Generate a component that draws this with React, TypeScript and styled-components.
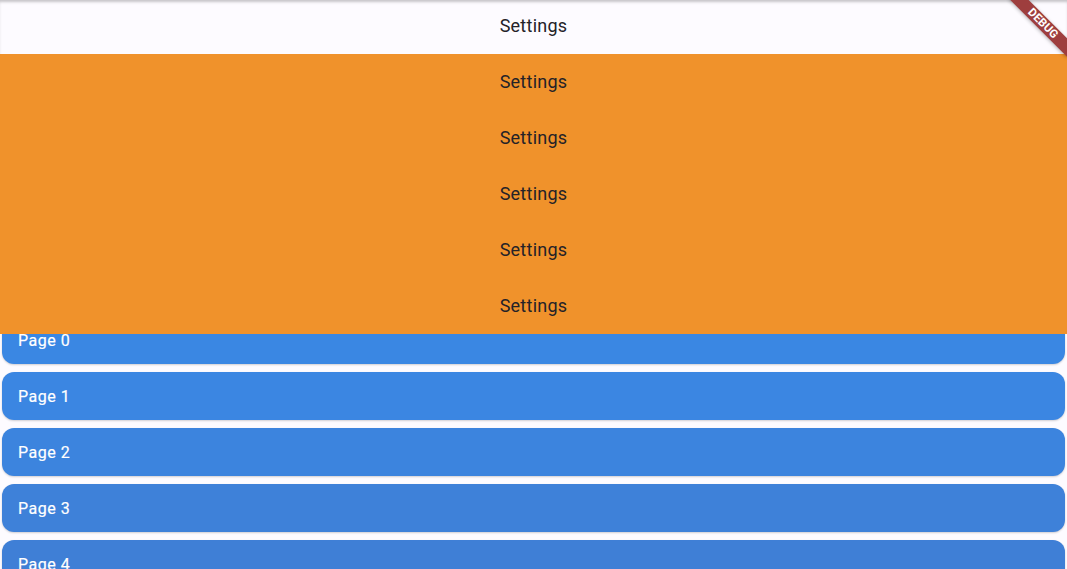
import React from "react";
import styled, { createGlobalStyle } from "styled-components";

const Global = createGlobalStyle`
  html, body { margin: 0; padding: 0; background: #fdfbff; }
  body { font-family: Roboto, "Noto Sans", sans-serif; overflow: hidden; }
  #root { height: 569px; }
`;

const Screen = styled.div`
  position: relative;
  width: 1067px;
  height: 569px;
  display: flex;
  flex-direction: column;
  background: #fdfbff;
  overflow: hidden;
`;

const Header = styled.div`
  height: 54px;
  box-sizing: border-box;
  padding-bottom: 4px;
  flex: none;
  display: flex;
  align-items: center;
  justify-content: center;
  background: #fdfbff;
  box-shadow: inset 0 3px 3px -1px rgba(0, 0, 0, 0.22);
  position: relative;
  z-index: 2;
`;

const Label = styled.span`
  font-size: 18px;
  color: #242228;
  letter-spacing: 0.25px;
`;

const Panel = styled.div`
  flex: none;
  display: flex;
  flex-direction: column;
  background: #f0922b;
  position: relative;
  z-index: 2;
`;

const PanelRow = styled.div`
  height: 56px;
  box-sizing: border-box;
  padding-bottom: 2px;
  display: flex;
  align-items: center;
  justify-content: center;
`;

const ListClip = styled.div`
  flex: 1;
  overflow: hidden;
`;

const List = styled.div`
  display: flex;
  flex-direction: column;
  gap: 8px;
  margin-top: -18px;
  padding: 0 2px;
`;

const Card = styled.div<{ $bg: string }>`
  height: 48px;
  flex: none;
  border-radius: 12px;
  background: ${(p) => p.$bg};
  box-shadow: 0 1px 2px rgba(0, 0, 0, 0.18);
  display: flex;
  align-items: center;
  padding-left: 16px;
  color: #ffffff;
  font-size: 16px;
  font-weight: 400;
  letter-spacing: 0.5px;
  -webkit-text-stroke: 0.18px #ffffff;
`;

const Banner = styled.div`
  position: absolute;
  top: 17px;
  right: -17px;
  width: 82px;
  height: 13px;
  transform: rotate(45deg);
  background: #9e3e3e;
  box-shadow: 0 1px 4px rgba(0, 0, 0, 0.3);
  display: flex;
  align-items: center;
  justify-content: center;
  color: #fff;
  font-family: Roboto, sans-serif;
  font-weight: 700;
  font-size: 11.5px;
  line-height: 13px;
  letter-spacing: 0.1px;
  z-index: 5;
`;

const cardColors = ["#3a87e3", "#3b86e2", "#3c84de", "#3e81d9", "#3f7fd6"];

export default function App() {
  return (
    <>
      <Global />
      <Screen>
        <Header>
          <Label>Settings</Label>
        </Header>
        <Panel>
          {[0, 1, 2, 3, 4].map((i) => (
            <PanelRow key={i}>
              <Label>Settings</Label>
            </PanelRow>
          ))}
        </Panel>
        <ListClip>
          <List>
            {cardColors.map((c, i) => (
              <Card key={i} $bg={c}>
                Page {i}
              </Card>
            ))}
          </List>
        </ListClip>
        <Banner>DEBUG</Banner>
      </Screen>
    </>
  );
}
